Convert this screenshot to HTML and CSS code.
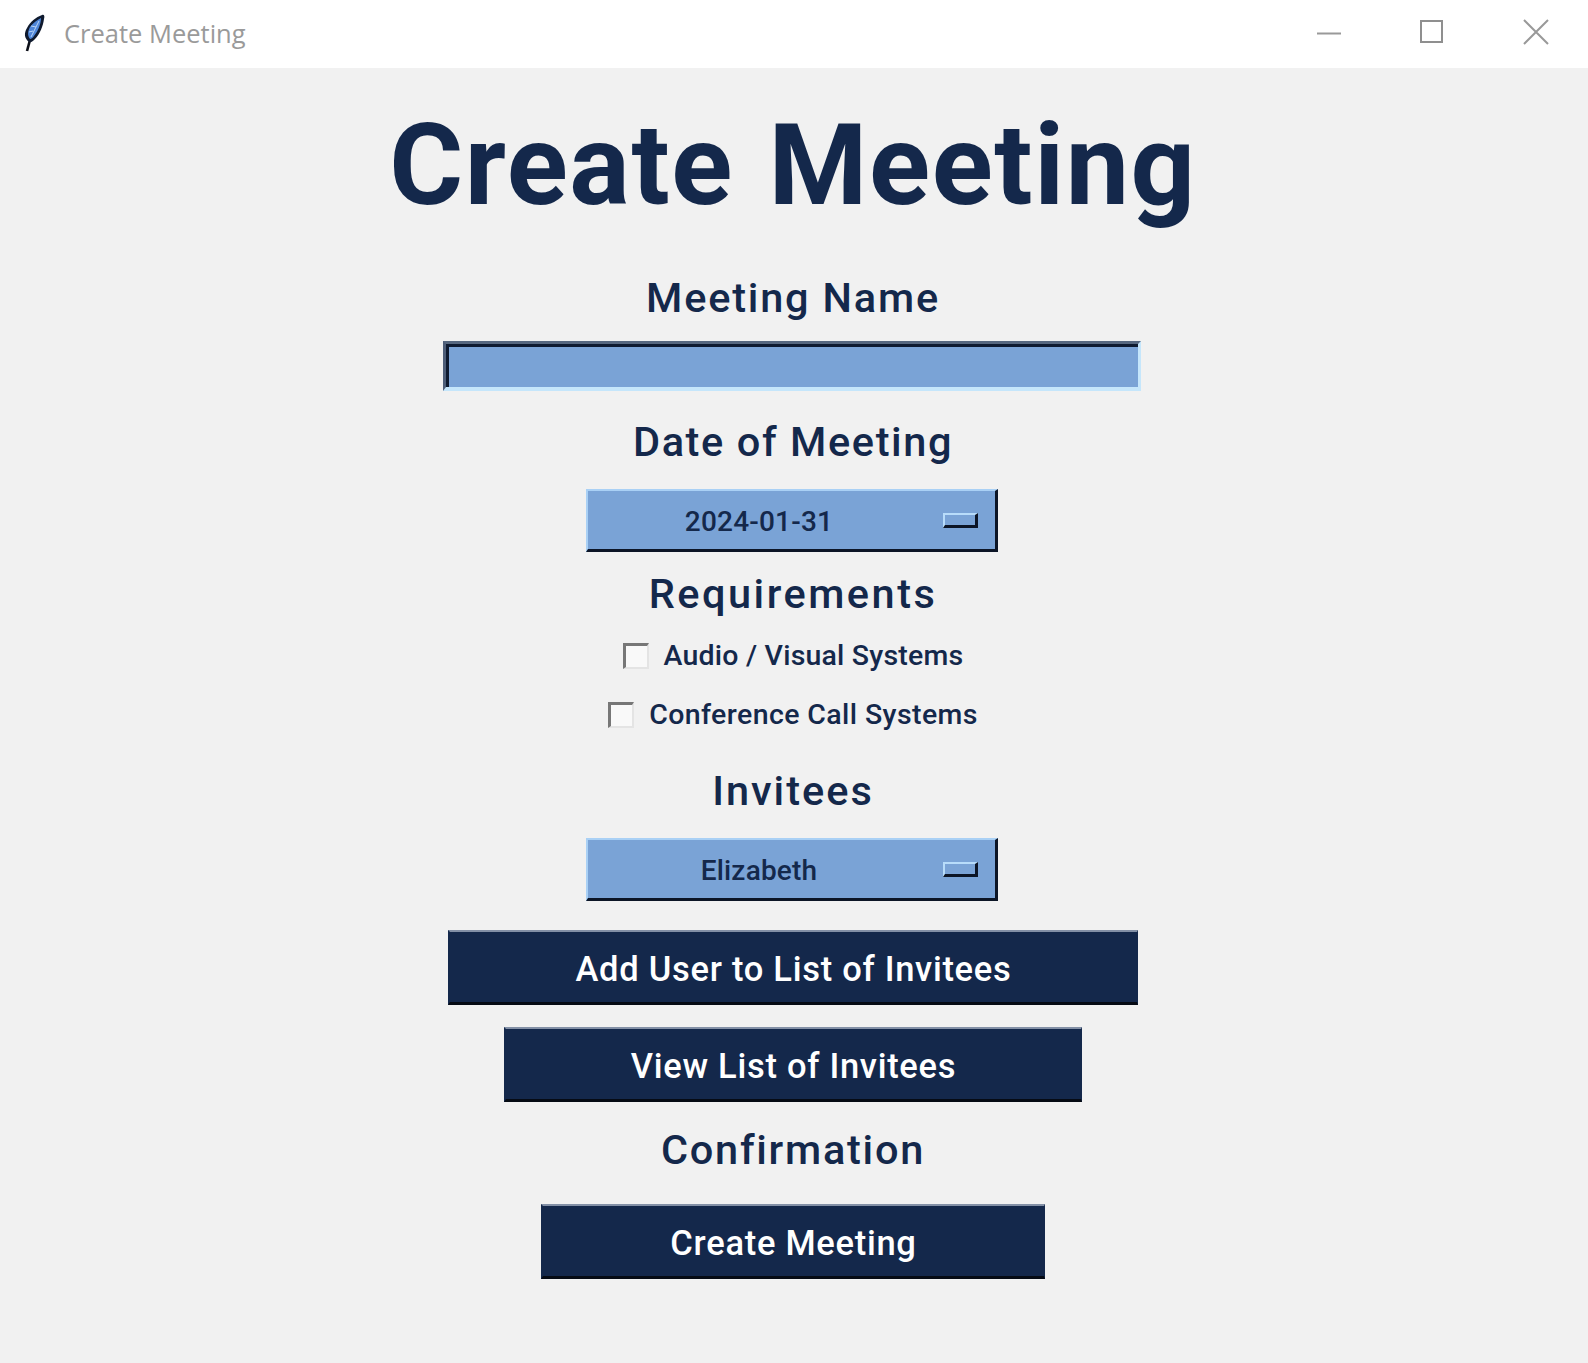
FILE: index.html
```html
<!DOCTYPE html>
<html lang="en">
<head>
<meta charset="utf-8">
<title>Create Meeting</title>
<link rel="stylesheet" href="styles.css">
</head>
<body>
<header class="titlebar">
  <svg class="feather" width="26" height="38" viewBox="0 0 26 38" aria-hidden="true">
    <path d="M6 37 L9 26" stroke="#0c0f18" stroke-width="2.6" fill="none"/>
    <path d="M8 28 C3 24 3 19 6 14 C9 8 15 3 21 1 C23 0 24 2 23 5 C22 12 19 20 14 25 C12 27 10 29 8 28 Z" fill="#0f1a2e"/>
    <path d="M9 25 C6 21 7 17 9 13 C12 9 16 6 20 4 C20 10 17 17 13 22 C12 24 10 25 9 25 Z" fill="#4f86d8"/>
    <path d="M10 23 L18 7 M8 18 L12 17 M10 12 L15 13" stroke="#b9d4f5" stroke-width="1" fill="none"/>
  </svg>
  <span class="window-title">Create Meeting</span>
  <div class="window-controls">
    <svg width="24" height="24" viewBox="0 0 24 24" aria-hidden="true"><path d="M0 13.5H24" stroke="#999" stroke-width="2"/></svg>
    <svg width="24" height="24" viewBox="0 0 24 24" aria-hidden="true"><rect x="1" y="1" width="21" height="21" fill="none" stroke="#8f8f8f" stroke-width="2"/></svg>
    <svg width="26" height="26" viewBox="0 0 26 26" aria-hidden="true"><path d="M1 1L25 25M25 1L1 25" stroke="#999" stroke-width="2" fill="none"/></svg>
  </div>
</header>
<main class="form">
  <h1 class="heading">Create Meeting</h1>
  <h2 class="label label-name">Meeting Name</h2>
  <input class="entry" type="text" aria-label="Meeting Name">
  <h2 class="label label-date">Date of Meeting</h2>
  <div class="menu"><span class="menu-text">2024-01-31</span><span class="indicator"></span></div>
  <h2 class="label label-req">Requirements</h2>
  <label class="check check-first"><span class="box"></span><span>Audio / Visual Systems</span></label>
  <label class="check check-second"><span class="box"></span><span>Conference Call Systems</span></label>
  <h2 class="label label-inv">Invitees</h2>
  <div class="menu"><span class="menu-text">Elizabeth</span><span class="indicator"></span></div>
  <button class="btn btn-add" type="button">Add User to List of Invitees</button>
  <button class="btn btn-view" type="button">View List of Invitees</button>
  <h2 class="label label-conf">Confirmation</h2>
  <button class="btn btn-create" type="button">Create Meeting</button>
</main>
</body>
</html>
```
FILE: styles.css
```css
* { box-sizing: border-box; }
html, body { margin: 0; height: 100%; }
body {
  background: #f1f1f1;
  font-family: Roboto, "Liberation Sans", sans-serif;
  color: #14284b;
  overflow: hidden;
}
.titlebar {
  height: 68px;
  background: #fff;
  display: flex;
  align-items: center;
  padding-left: 21px;
}
.feather { flex: none; margin-top: -3px; }
.window-title {
  margin-left: 17px;
  margin-top: -2px;
  font-family: "Open Sans", sans-serif;
  font-size: 25.5px;
  color: #9a9a9a;
}
.window-controls {
  margin-left: auto;
  margin-right: 39px;
  margin-top: -4px;
  display: flex;
  align-items: center;
  gap: 79px;
}
.form {
  display: flex;
  flex-direction: column;
  align-items: center;
  padding-right: 2px;
}
.heading {
  margin: 30px 0 0;
  font-size: 113px;
  line-height: 136px;
  font-weight: 700;
  letter-spacing: 1.6px;
  word-spacing: 5px;
}
.label {
  margin: 0;
  font-size: 41.5px;
  line-height: 48px;
  font-weight: 500;
  letter-spacing: 2px;
}
.label-name { margin-top: 40px; letter-spacing: 1.8px; }
.label-date { margin-top: 27px; letter-spacing: 1.6px; }
.label-req { margin-top: 18px; letter-spacing: 2.5px; }
.label-inv { margin-top: 35px; }
.label-conf { margin-top: 24px; letter-spacing: 1.75px; }
.entry {
  display: block;
  width: 698px;
  height: 50px;
  margin: 19px 2px 0 0;
  padding: 0;
  background: #7aa3d6;
  border-style: solid;
  border-width: 3px 3px 4px 3px;
  border-color: #56677f #c5e6fb #c5e6fb #4d5d78;
  box-shadow: inset 0 3px #0e1a30, inset 3px 0 #0e1a30;
  outline: none;
}
.menu {
  width: 412px;
  height: 63px;
  margin: 23px 2px 0 0;
  display: flex;
  align-items: center;
  padding-right: 17px;
  background: #7aa3d6;
  border-style: solid;
  border-width: 2px 3px 3px 2px;
  border-color: #a9d0f5 #0c1526 #0c1526 #a9d0f5;
}
.menu-text {
  flex: 1;
  text-align: center;
  font-size: 28px;
  font-weight: 500;
  letter-spacing: .2px;
  padding: 2px 6px 0 0;
}
.indicator {
  width: 35px;
  height: 15px;
  margin-left: 7px;
  background: #7aa3d6;
  border-style: solid;
  border-width: 2px 3px 3px 2px;
  border-color: #b8dcfa #0c1526 #0c1526 #b8dcfa;
}
.check {
  display: flex;
  align-items: center;
  gap: 15px;
  font-size: 28.5px;
  font-weight: 500;
  letter-spacing: .2px;
  line-height: 34px;
}
.check-first { margin-top: 21px; }
.check-second { margin-top: 25px; letter-spacing: .4px; }
.box {
  width: 26px;
  height: 26px;
  background: #f9f9f9;
  border-style: solid;
  border-width: 3px 2px 2px 3px;
  border-color: #777 #e4e4e4 #e4e4e4 #777;
}
.btn {
  display: block;
  height: 75px;
  padding: 4px 0 0;
  background: #14284b;
  color: #fff;
  font-family: inherit;
  font-size: 34.5px;
  font-weight: 500;
  letter-spacing: .72px;
  border-style: solid;
  border-width: 2px 1px 3px 2px;
  border-color: #8390a6 #14284b #060b14 #14284b;
}
.btn-add { width: 690px; margin-top: 29px; }
.btn-view { width: 578px; margin-top: 22px; }
.btn-create { width: 504px; margin-top: 30px; }
```
